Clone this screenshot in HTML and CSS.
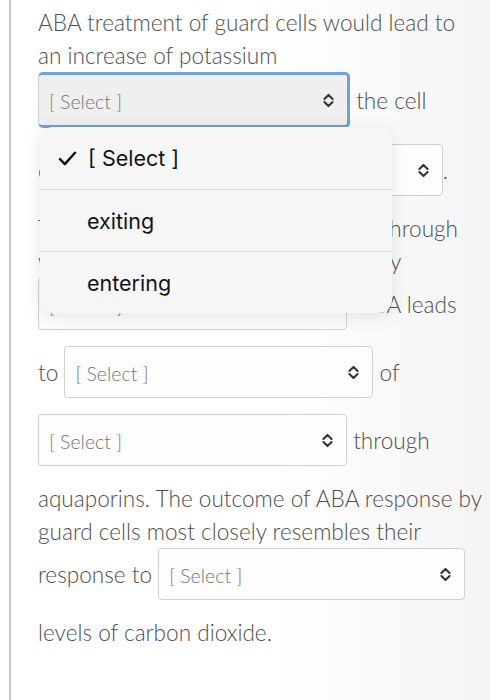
FILE: index.html
```html
<!DOCTYPE html>
<html lang="en">
<head>
<meta charset="utf-8">
<title>ABA question</title>
<link rel="stylesheet" href="styles.css">
</head>
<body>
<div class="page">
  <p class="question">ABA treatment of guard cells would lead to<br>an increase of potassium<br><span class="sel sel-focus"><span class="sel-label">[ Select ]</span><svg class="chev" viewBox="0 0 10 14" width="11" height="15"><path d="M1.2 5.6 L5 1.8 L8.8 5.6 M1.2 8.4 L5 12.2 L8.8 8.4"/></svg></span> the cell<br>causing a <span class="sel"><span class="sel-label">[ Select ]</span><svg class="chev" viewBox="0 0 10 14" width="11" height="15"><path d="M1.2 5.6 L5 1.8 L8.8 5.6 M1.2 8.4 L5 12.2 L8.8 8.4"/></svg></span>.<br>The water will then flow out of cell through<br>water channels, and then followed by<br><span class="sel"><span class="sel-label">[ Select ]</span><svg class="chev" viewBox="0 0 10 14" width="11" height="15"><path d="M1.2 5.6 L5 1.8 L8.8 5.6 M1.2 8.4 L5 12.2 L8.8 8.4"/></svg></span>. ABA leads<br>to <span class="sel"><span class="sel-label">[ Select ]</span><svg class="chev" viewBox="0 0 10 14" width="11" height="15"><path d="M1.2 5.6 L5 1.8 L8.8 5.6 M1.2 8.4 L5 12.2 L8.8 8.4"/></svg></span> of<br><span class="sel"><span class="sel-label">[ Select ]</span><svg class="chev" viewBox="0 0 10 14" width="11" height="15"><path d="M1.2 5.6 L5 1.8 L8.8 5.6 M1.2 8.4 L5 12.2 L8.8 8.4"/></svg></span> through<br>aquaporins. The outcome of ABA response by<br>guard cells most closely resembles their<br>response to <span class="sel sel-narrow"><span class="sel-label">[ Select ]</span><svg class="chev" viewBox="0 0 10 14" width="11" height="15"><path d="M1.2 5.6 L5 1.8 L8.8 5.6 M1.2 8.4 L5 12.2 L8.8 8.4"/></svg></span><br>levels of carbon dioxide.</p>

  <div class="popup">
    <div class="opt opt-checked"><svg class="check" viewBox="0 0 20 16" width="19" height="15"><path d="M2 8.6 L7.2 14 L18 1.8"/></svg><span>[ Select ]</span></div>
    <div class="opt"><span>exiting</span></div>
    <div class="opt"><span>entering</span></div>
  </div>
</div>
</body>
</html>
```

FILE: styles.css
```css
html, body {
  margin: 0;
  padding: 0;
  background: #ffffff;
}

body {
  width: 490px;
  height: 700px;
  overflow: hidden;
  background: linear-gradient(to right, #ffffff 55%, #f4f4f4 100%);
}

.page {
  position: relative;
  margin-left: 9px;
  height: 700px;
  border-left: 2px solid #c6c6c6;
  padding: 6px 0 0 27px;
  box-sizing: border-box;
}

.question {
  margin: 0;
  white-space: nowrap;
  font-family: Lato, "Liberation Sans", sans-serif;
  font-weight: 300;
  font-size: 22.6px;
  line-height: 33px;
  color: #4e4e4e;
}

.sel {
  display: inline-flex;
  align-items: center;
  justify-content: space-between;
  box-sizing: border-box;
  width: 309px;
  height: 52px;
  margin: 0 0 16px 0;
  padding: 0 13px 0 10px;
  border: 1px solid #cfcfcf;
  border-radius: 4px;
  background: #fdfdfd;
  vertical-align: baseline;
  font-size: 19.5px;
  line-height: 24px;
  color: #757575;
}

.sel-label {
  padding-top: 4px;
}

.sel-focus {
  background: #efefef;
  border-top: 3px solid #6fa0d8;
  border-right: 3px solid #6fa0d8;
  border-bottom: 3px solid #6fa0d8;
  border-left: 1px solid #c9d4e0;
  width: 312px;
  height: 56px;
  border-radius: 5px;
}

.sel-narrow {
  width: 307px;
}

.chev {
  flex: none;
}

.chev path {
  fill: none;
  stroke: #333333;
  stroke-width: 1.9;
  stroke-linecap: round;
  stroke-linejoin: round;
}

.popup {
  position: absolute;
  left: 29px;
  top: 127px;
  width: 352px;
  background: #f6f6f6;
  border-radius: 13px;
  box-shadow: 0 3px 18px rgba(0, 0, 0, 0.10);
  font-family: Inter, "Noto Sans", sans-serif;
  font-size: 21.5px;
  color: #141414;
  overflow: hidden;
}

.opt {
  display: flex;
  align-items: center;
  height: 62px;
  padding-left: 47px;
  box-sizing: border-box;
  border-top: 1px solid #dadada;
}

.opt:first-child {
  border-top: none;
}

.opt-checked {
  padding-left: 18px;
  gap: 11px;
}

.check path {
  fill: none;
  stroke: #111111;
  stroke-width: 2.6;
  stroke-linecap: round;
  stroke-linejoin: round;
}
```
